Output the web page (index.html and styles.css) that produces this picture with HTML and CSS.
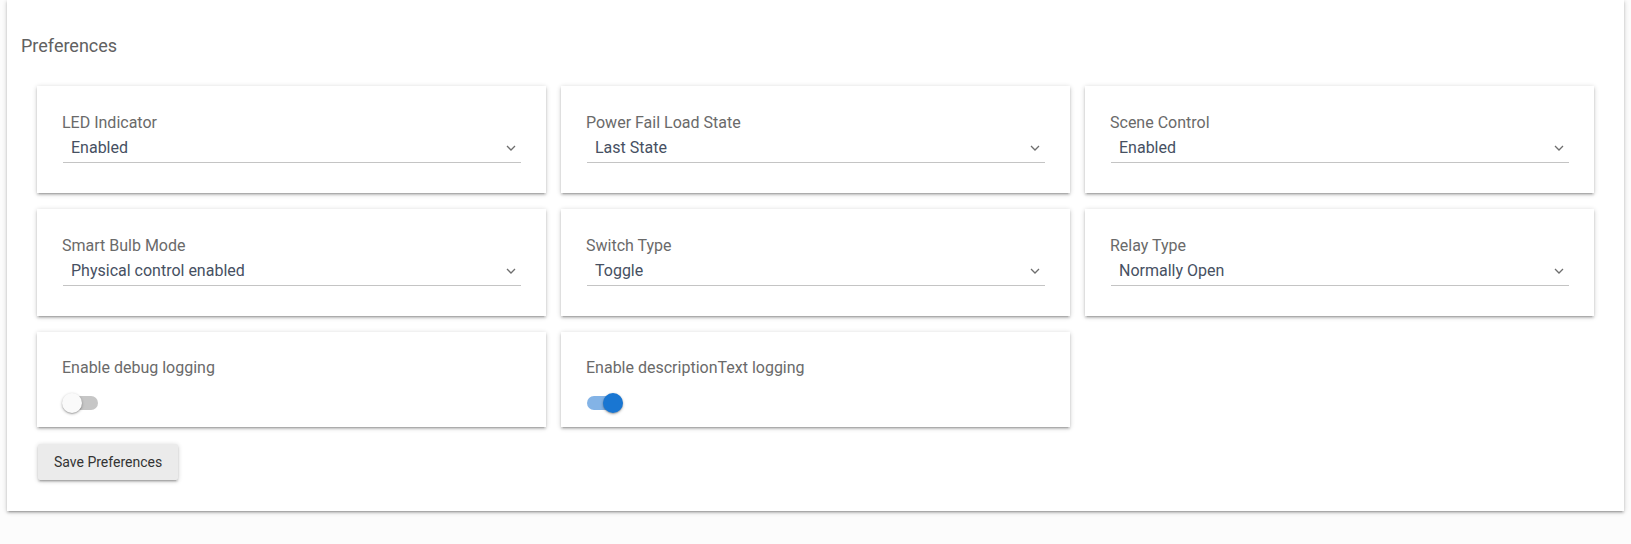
FILE: index.html
```html
<!DOCTYPE html>
<html lang="en">
<head>
  <meta charset="UTF-8">
  <meta name="viewport" content="width=device-width, initial-scale=1.0">
  <title>Preferences</title>
  <link rel="stylesheet" href="styles.css">
</head>
<body>
  <div class="page">
    <div class="prefs-card">
      <h2 class="prefs-title">Preferences</h2>

      <div class="prefs-grid">
        <div class="pref-item">
          <label class="pref-label">LED Indicator</label>
          <div class="select">
            <span class="select-value">Enabled</span>
            <svg class="chevron" width="10" height="6" viewBox="0 0 10 6"><polyline points="1,1 5,5 9,1" /></svg>
          </div>
        </div>

        <div class="pref-item">
          <label class="pref-label">Power Fail Load State</label>
          <div class="select">
            <span class="select-value">Last State</span>
            <svg class="chevron" width="10" height="6" viewBox="0 0 10 6"><polyline points="1,1 5,5 9,1" /></svg>
          </div>
        </div>

        <div class="pref-item">
          <label class="pref-label">Scene Control</label>
          <div class="select">
            <span class="select-value">Enabled</span>
            <svg class="chevron" width="10" height="6" viewBox="0 0 10 6"><polyline points="1,1 5,5 9,1" /></svg>
          </div>
        </div>

        <div class="pref-item">
          <label class="pref-label">Smart Bulb Mode</label>
          <div class="select">
            <span class="select-value">Physical control enabled</span>
            <svg class="chevron" width="10" height="6" viewBox="0 0 10 6"><polyline points="1,1 5,5 9,1" /></svg>
          </div>
        </div>

        <div class="pref-item">
          <label class="pref-label">Switch Type</label>
          <div class="select">
            <span class="select-value">Toggle</span>
            <svg class="chevron" width="10" height="6" viewBox="0 0 10 6"><polyline points="1,1 5,5 9,1" /></svg>
          </div>
        </div>

        <div class="pref-item">
          <label class="pref-label">Relay Type</label>
          <div class="select">
            <span class="select-value">Normally Open</span>
            <svg class="chevron" width="10" height="6" viewBox="0 0 10 6"><polyline points="1,1 5,5 9,1" /></svg>
          </div>
        </div>

        <div class="pref-item toggle-item">
          <label class="pref-label">Enable debug logging</label>
          <div class="switch">
            <span class="switch-track"></span>
            <span class="switch-thumb"></span>
          </div>
        </div>

        <div class="pref-item toggle-item">
          <label class="pref-label">Enable descriptionText logging</label>
          <div class="switch on">
            <span class="switch-track"></span>
            <span class="switch-thumb"></span>
          </div>
        </div>
      </div>

      <button class="button">Save Preferences</button>
    </div>
  </div>
</body>
</html>
```

FILE: styles.css
```css
* {
  margin: 0;
  padding: 0;
  box-sizing: border-box;
  font-family: Roboto, 'Liberation Sans', Arial, sans-serif;
}

body {
  background: #fcfcfc;
  min-height: 100vh;
}

.page {
  padding: 0 7px;
}

.prefs-card {
  background: white;
  padding: 34px 14px 31px;
  box-shadow: 0 2px 2px 0 rgba(0,0,0,0.14), 0 3px 1px -2px rgba(0,0,0,0.12), 0 1px 5px 0 rgba(0,0,0,0.2);
}

.prefs-title {
  font-size: 18px;
  font-weight: 400;
  line-height: 24px;
  color: #616161;
  margin-bottom: 28px;
}

.prefs-grid {
  display: grid;
  grid-template-columns: repeat(3, 1fr);
  column-gap: 15px;
  row-gap: 16px;
  margin: 0 16px;
}

.pref-item {
  background: white;
  padding: 27px 25px 30px 25px;
  display: flex;
  flex-direction: column;
  box-shadow: 0 2px 2px 0 rgba(0,0,0,0.14), 0 3px 1px -2px rgba(0,0,0,0.12), 0 1px 5px 0 rgba(0,0,0,0.2);
}

.pref-label {
  font-size: 16px;
  line-height: 20px;
  color: #6a6a6a;
}

.select {
  display: flex;
  align-items: center;
  justify-content: space-between;
  margin-top: 5px;
  margin-left: 1px;
  padding: 0 5px 4px 8px;
  border-bottom: 1px solid #c4c4c4;
}

.select-value {
  font-size: 16px;
  line-height: 20px;
  color: #465062;
}

.chevron {
  fill: none;
  stroke: #6e6e6e;
  stroke-width: 1.3;
}

.toggle-item {
  padding: 26px 25px 14px 25px;
}

.switch {
  position: relative;
  width: 37px;
  height: 20px;
  margin-top: 15px;
}

.switch-track {
  position: absolute;
  left: 1px;
  top: 3px;
  width: 35px;
  height: 14px;
  border-radius: 7px;
  background: #c6c6c6;
}

.switch-thumb {
  position: absolute;
  left: 0;
  top: 0;
  width: 20px;
  height: 20px;
  border-radius: 50%;
  background: #fafafa;
  box-shadow: 0 1px 3px rgba(0,0,0,0.3), 0 1px 1px rgba(0,0,0,0.14);
}

.switch.on .switch-track {
  background: #83b3e6;
}

.switch.on .switch-thumb {
  left: 17px;
  background: #1976d2;
}

.button {
  display: inline-block;
  margin: 17px 0 0 17px;
  height: 36px;
  padding: 0 16px;
  background: #ebebeb;
  color: #333;
  font-size: 14px;
  border: none;
  border-radius: 2px;
  cursor: pointer;
  box-shadow: 0 2px 2px 0 rgba(0,0,0,0.14), 0 3px 1px -2px rgba(0,0,0,0.12), 0 1px 5px 0 rgba(0,0,0,0.2);
}
```
